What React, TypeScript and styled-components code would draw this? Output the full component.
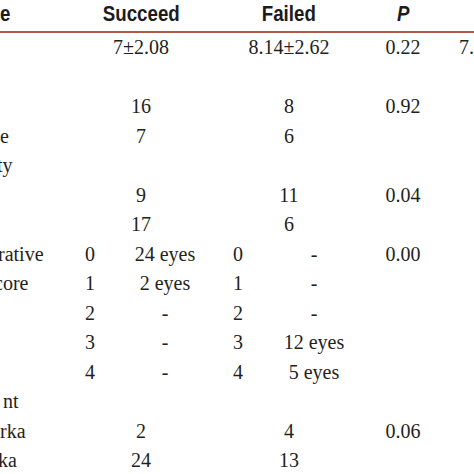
import styled, { createGlobalStyle } from 'styled-components';

const GlobalStyle = createGlobalStyle`
  html, body {
    margin: 0;
    padding: 0;
    background: #ffffff;
    overflow: hidden;
  }
`;

const COLS = '76px 28px 122px 24px 128px 50px 100px';

type Line = {
  label?: string;
  shift?: number;
  g1?: string;
  s?: string;
  g2?: string;
  f?: string;
  p?: string;
  x?: string;
};

const rows: Line[] = [
  { s: '7±2.08', f: '8.14±2.62', p: '0.22', x: '7.29±2.41' },
  {},
  { s: '16', f: '8', p: '0.92' },
  { label: 'e', shift: 0, s: '7', f: '6' },
  { label: 'ty', shift: -3 },
  { s: '9', f: '11', p: '0.04' },
  { s: '17', f: '6' },
  { label: 'rative', shift: -2, g1: '0', s: '24 eyes', g2: '0', f: '-', p: '0.00' },
  { label: 'core', shift: -6, g1: '1', s: '2 eyes', g2: '1', f: '-' },
  { g1: '2', s: '-', g2: '2', f: '-' },
  { g1: '3', s: '-', g2: '3', f: '12 eyes' },
  { g1: '4', s: '-', g2: '4', f: '5 eyes' },
  { label: 'nt', shift: 3 },
  { label: 'rka', shift: 0, s: '2', f: '4', p: '0.06' },
  { label: 'ka', shift: -2, s: '24', f: '13' },
];

const Page = styled.div`
  width: 528px;
  font-family: 'Liberation Serif', 'Times New Roman', serif;
  font-size: 20px;
  color: #231f20;
`;

const HeadRow = styled.div`
  display: grid;
  grid-template-columns: ${COLS};
  height: 31px;
  align-items: center;
  border-bottom: 2px solid #b35a4d;
  font-family: 'Liberation Sans', Arial, sans-serif;
  font-weight: 700;
  font-size: 22px;
  color: #1d1b1c;
`;

const Row = styled.div`
  display: grid;
  grid-template-columns: ${COLS};
  height: 29.5px;
  line-height: 29.5px;
  white-space: nowrap;
`;

const Label = styled.div<{ $shift?: number }>`
  overflow: hidden;
  text-indent: ${(p) => p.$shift ?? 0}px;
`;

const HeadLabel = styled.div`
  line-height: 31px;
  transform: translateY(-2px);
`;

/* narrow bold face, as in the printed table head */
const Narrow = styled.span<{ $origin?: string }>`
  display: inline-block;
  transform: scaleX(0.85);
  transform-origin: ${(p) => p.$origin ?? 'center'};
`;

const Grade = styled.div<{ $col: number }>`
  grid-column: ${(p) => p.$col};
  text-align: center;
`;

const Value = styled.div<{ $from: number; $to: number; $pad?: number }>`
  grid-column: ${(p) => p.$from} / ${(p) => p.$to};
  text-align: center;
  padding-right: ${(p) => p.$pad ?? 0}px;
`;

const HeadCell = styled(Value)`
  line-height: 31px;
  transform: translateY(-2px);
`;

const Italic = styled.span`
  font-style: italic;
`;

const Extra = styled.div`
  grid-column: 7;
  padding-left: 31px;
  overflow: hidden;
`;

export default function App() {
  return (
    <Page>
      <GlobalStyle />
      <HeadRow>
        <HeadLabel>
          <Narrow $origin="left">e</Narrow>
        </HeadLabel>
        <HeadCell $from={2} $to={4} $pad={20}>
          <Narrow>Succeed</Narrow>
        </HeadCell>
        <HeadCell $from={4} $to={6} $pad={26}>
          <Narrow>Failed</Narrow>
        </HeadCell>
        <HeadCell $from={6} $to={7}>
          <Narrow>
            <Italic>P</Italic>
          </Narrow>
        </HeadCell>
      </HeadRow>
      {rows.map((r, i) => {
        const graded = r.g1 !== undefined;
        return (
          <Row key={i}>
            <Label $shift={r.shift}>{r.label ?? ''}</Label>
            {graded ? (
              <>
                <Grade $col={2}>{r.g1}</Grade>
                <Value $from={3} $to={4}>{r.s}</Value>
                <Grade $col={4}>{r.g2}</Grade>
                <Value $from={5} $to={6}>{r.f}</Value>
              </>
            ) : (
              <>
                <Value $from={2} $to={4} $pad={20}>{r.s ?? ''}</Value>
                <Value $from={4} $to={6} $pad={26}>{r.f ?? ''}</Value>
              </>
            )}
            <Value $from={6} $to={7}>{r.p ?? ''}</Value>
            <Extra>{r.x ?? ''}</Extra>
          </Row>
        );
      })}
    </Page>
  );
}
